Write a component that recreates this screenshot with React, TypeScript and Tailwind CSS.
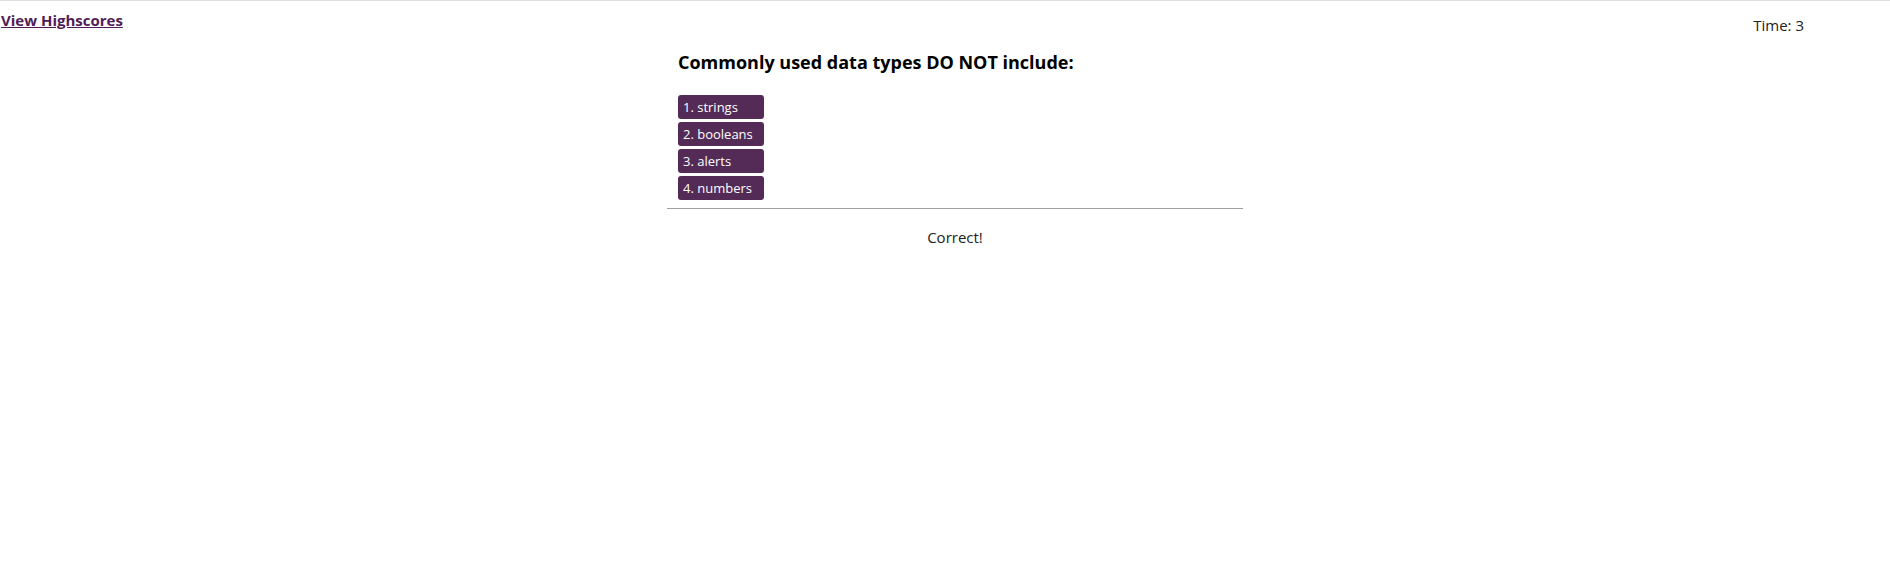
export default function App() {
  const choices = ["1. strings", "2. booleans", "3. alerts", "4. numbers"];

  return (
    <div className="min-h-[573px] bg-white font-['Open_Sans',sans-serif] text-black">
      {/* Header */}
      <header className="flex h-[44px] items-start justify-between border-t border-[#dddddd]">
        <a
          href="#"
          className="ml-[1px] mt-[9px] text-[15px] font-bold leading-[20px] text-[#511c55] underline"
        >
          View Highscores
        </a>
        <div className="mr-[86px] mt-[14px] text-[15px] leading-[20px] text-[#222]">
          Time: 3
        </div>
      </header>

      {/* Question */}
      <main className="ml-[667px] w-[576px]">
        <h2 className="mt-[5px] pl-[11px] text-[18px] font-bold leading-[26px]">
          Commonly used data types DO NOT include:
        </h2>
        <div className="mt-[20px] flex flex-col items-start gap-[3px] pl-[11px]">
          {choices.map((choice) => (
            <button
              key={choice}
              className="h-[24px] w-[86px] rounded-[3px] bg-[#532b56] px-[5px] text-left text-[13px] leading-[24px] text-white"
            >
              {choice}
            </button>
          ))}
        </div>
        <hr className="mt-[8px] border-t-[1.5px] border-[#a0a0a0]" />
        <p className="mt-[17px] text-center text-[15px] leading-[22px] text-[#222]">
          Correct!
        </p>
      </main>
    </div>
  );
}
